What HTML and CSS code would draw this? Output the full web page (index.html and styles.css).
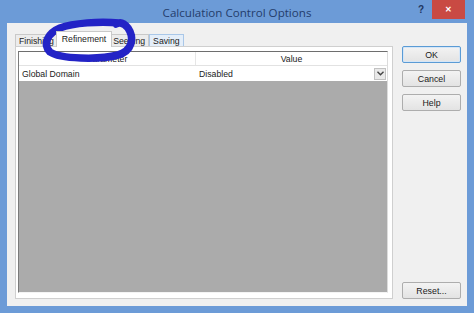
FILE: index.html
```html
<!DOCTYPE html>
<html>
<head>
  <title>Calculation Control Options</title>
  <link rel="stylesheet" href="styles.css">
</head>
<body>
  <div class="frame">
    <div class="titlebar">
      <div></div>
      <div class="title">Calculation Control Options</div>
      <div class="controls">
        <span class="help">?</span>
        <span class="close">&#x2715;</span>
      </div>
    </div>

    <div class="client">
      <div class="tab-area">
        <div class="tabs">
          <div class="tab">Finishing</div>
          <div class="tab active">Refinement</div>
          <div class="tab">Seeding</div>
          <div class="tab hot">Saving</div>
        </div>
        <div class="panel">
          <div class="grid">
            <div class="grid-head">
              <div class="cell param">Parameter</div>
              <div class="cell value">Value</div>
            </div>
            <div class="grid-row">
              <div class="cell param">Global Domain</div>
              <div class="cell value">
                <span>Disabled</span>
                <span class="drop">
                  <svg width="7" height="5" viewBox="0 0 7 5"><path d="M0.5 0.8 L3.5 3.8 L6.5 0.8" fill="none" stroke="#444" stroke-width="1.4"/></svg>
                </span>
              </div>
            </div>
          </div>
        </div>
      </div>

      <div class="buttons">
        <button class="btn default">OK</button>
        <button class="btn">Cancel</button>
        <button class="btn">Help</button>
        <button class="btn reset">Reset...</button>
      </div>
    </div>

    <!-- marker scribble drawn over the tab -->
    <svg class="mark" width="474" height="313" viewBox="0 0 474 313">
      <path d="M119 23 C100 21 73 23 60 28 C48 33 42 44 50 52 C60 59 99 60 118 55 C132 51 135 38 128 28 C125 24 121 21 116 24" fill="none" stroke="#2323c6" stroke-width="7.5" stroke-linecap="round" stroke-linejoin="round"/>
    </svg>
  </div>
</body>
</html>
```

FILE: styles.css
```css
*{
    margin: 0;
    padding: 0;
    box-sizing: border-box;
}
body{
    font-family: 'Liberation Sans', Arial, sans-serif;
    font-size: 8.7px;
    color: #1a1a1a;
}
.frame{
    width: 474px;
    height: 313px;
    background: #6c9bd7;
    position: relative;
    overflow: hidden;
}

.titlebar{
    height: 23px;
    display: grid;
    grid-template-columns: 1fr auto 1fr;
}
.title{
    font-family: 'Open Sans', 'Noto Sans', sans-serif;
    font-size: 11.6px;
    color: #243d6c;
    line-height: 25px;
}
.controls{
    display: flex;
    justify-content: flex-end;
    align-items: flex-start;
    padding-right: 9px;
}
.help{
    font-family: 'Liberation Sans', sans-serif;
    font-weight: bold;
    font-size: 10px;
    color: #1f3660;
    margin-right: 8px;
    line-height: 20px;
}
.close{
    width: 33px;
    height: 19px;
    background: #c94a43;
    color: #fff;
    font-size: 8px;
    font-weight: bold;
    display: flex;
    align-items: center;
    justify-content: center;
}

.client{
    margin: 0 7px 7px;
    height: 283px;
    background: #f0f0f0;
    display: flex;
    gap: 9px;
    padding: 8px 6px 7px 8px;
}

.tab-area{
    width: 378px;
    display: flex;
    flex-direction: column;
}
.tabs{
    height: 15px;
    display: flex;
    align-items: flex-end;
}
.tab{
    height: 12px;
    padding: 0 3px;
    background: #ececec;
    border: 1px solid #c9c9c9;
    border-bottom: 0;
    line-height: 12px;
    color: #222;
}
.tab + .tab{
    border-left: 0;
}
.tab.active{
    height: 16px;
    margin: 0 -2px -1px;
    padding: 1px 5px 0;
    background: #fff;
    border-left: 1px solid #c9c9c9;
    position: relative;
    z-index: 1;
}
.tab.active + .tab{
    border-left: 0;
}
.tab.hot{
    background: #e4eef9;
    border-color: #a9c7e8;
    border-left: 1px solid #a9c7e8;
}

.panel{
    flex: 1;
    background: #fff;
    border: 1px solid #cfcfcf;
    padding: 4px 4px 5px 2px;
    display: flex;
}
.grid{
    flex: 1;
    background: #ababab;
    border: 1px solid;
    border-color: #6e6e6e #dcdcdc #f4f4f4 #7a7a7a;
}
.grid-head, .grid-row{
    display: flex;
    background: #fff;
}
.grid-head{
    height: 14px;
    border-bottom: 1px solid #e2e2e2;
    line-height: 15px;
    text-align: center;
}
.grid-row{
    height: 15px;
    line-height: 16px;
}
.cell.param{
    width: 177px;
    border-right: 1px solid #e6e6e6;
}
.grid-row .param{
    padding-left: 3px;
    border-right: 0;
}
.cell.value{
    flex: 1;
}
.grid-row .value{
    display: flex;
    align-items: center;
    justify-content: space-between;
    padding: 0 1px 0 3px;
}
.drop{
    width: 12px;
    height: 12px;
    background: #e9e9e9;
    border: 1px solid #c2c2c2;
    display: flex;
    align-items: center;
    justify-content: center;
}

.buttons{
    width: 59px;
    display: flex;
    flex-direction: column;
    gap: 7px;
    padding-top: 15px;
}
.btn{
    height: 17px;
    font-family: 'Liberation Sans', Arial, sans-serif;
    font-size: 8.8px;
    color: #1a1a1a;
    background: linear-gradient(#f3f3f3, #e3e3e3);
    border: 1px solid #adadad;
    border-radius: 2px;
}
.btn.default{
    border-color: #5a9bd5;
    box-shadow: inset 0 0 0 1px #d5e6f7;
}
.btn.reset{
    margin-top: auto;
}

.mark{
    position: absolute;
    top: 0;
    left: 0;
    pointer-events: none;
}
```
